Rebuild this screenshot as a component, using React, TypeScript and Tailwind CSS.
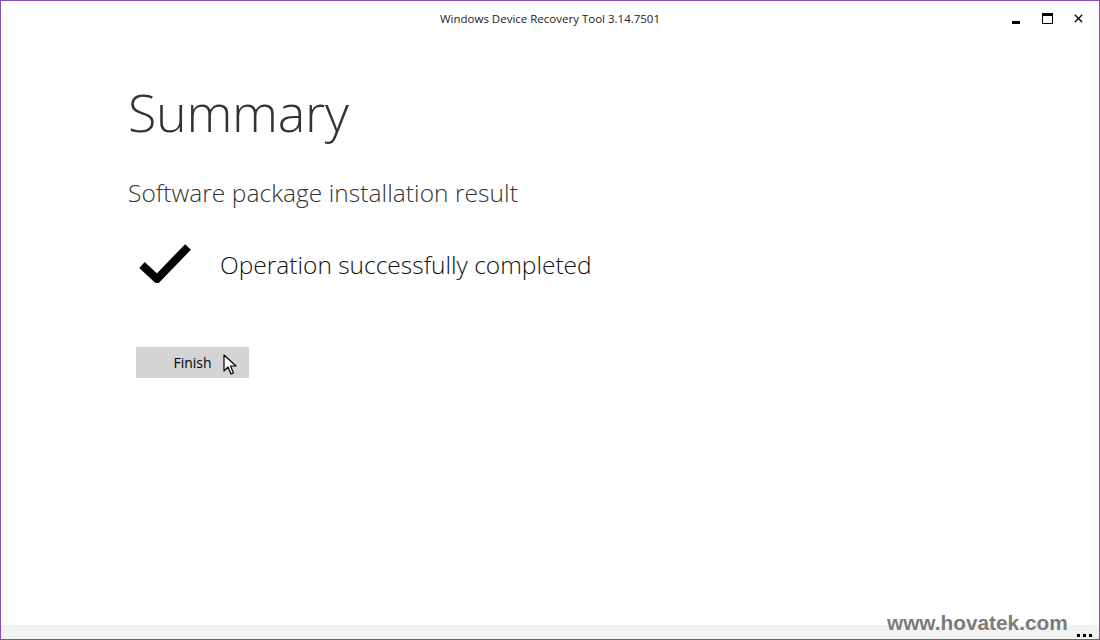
import { X } from "lucide-react";

const App = () => {
    return (
        <div className="relative w-[1100px] h-[640px] bg-white border border-[#8a4bb0] flex flex-col overflow-hidden"
            style={{ fontFamily: '"Open Sans", "Noto Sans", sans-serif' }}>
            {/* title bar */}
            <div className="relative h-[34px] flex items-center justify-center">
                <span className="text-[11.5px] text-[#222] pt-[1px]">Windows Device Recovery Tool 3.14.7501</span>
                <div className="absolute right-[14px] top-[10px] flex items-center gap-[19px] text-black">
                    <div className="w-[14px] h-[14px] flex items-end justify-center"><div className="w-[8px] h-[3px] bg-black mb-[1px]" /></div>
                    <div className="w-[11px] h-[11px] border border-black border-t-[3px]" />
                    <X size={13} strokeWidth={2.5} />
                </div>
            </div>

            {/* content */}
            <div className="flex-1 pl-[127px] pt-[51px]">
                <h1 className="text-[52px] font-light text-[#333] leading-none tracking-[-0.3px]">Summary</h1>
                <p className="mt-[43px] text-[24.5px] font-light text-[#333] leading-none tracking-[0.05px]">Software package installation result</p>
                <div className="mt-[33px] flex items-start">
                    <svg width="56" height="44" viewBox="0 0 56 44" className="ml-[10px]">
                        <path d="M4 26 L19 40 L50 8" fill="none" stroke="#000" strokeWidth="8" strokeLinejoin="miter" />
                    </svg>
                    <span className="ml-[26px] mt-[14px] text-[24.5px] font-light text-[#111] leading-none">Operation successfully completed</span>
                </div>
                <button className="mt-[64px] ml-[8px] w-[113px] h-[31px] bg-[#d4d4d4] text-[14px] text-black flex items-center justify-center relative">
                    Finish
                    <svg width="14" height="22" viewBox="0 0 14 22" className="absolute left-[87px] top-[7px]">
                        <path d="M1 1 L1 17 L5 13 L8 20 L10.5 19 L7.5 12 L13 12 Z" fill="#fff" stroke="#000" strokeWidth="1.2" strokeLinejoin="round" />
                    </svg>
                </button>
            </div>

            {/* app bar */}
            <div className="relative h-[14px] bg-[#f2f2f2]">
                <div className="absolute right-[7px] bottom-[2px] flex gap-[3px]">
                    <div className="w-[3px] h-[3px] bg-black" />
                    <div className="w-[3px] h-[3px] bg-black" />
                    <div className="w-[3px] h-[3px] bg-black" />
                </div>
            </div>
            <div className="absolute left-[886px] top-[612px] text-[20.8px] font-bold text-[#7b7b7b] leading-none"
                style={{ fontFamily: '"Liberation Sans", Arial, sans-serif' }}>www.hovatek.com</div>
        </div>
    )
}

export default App
